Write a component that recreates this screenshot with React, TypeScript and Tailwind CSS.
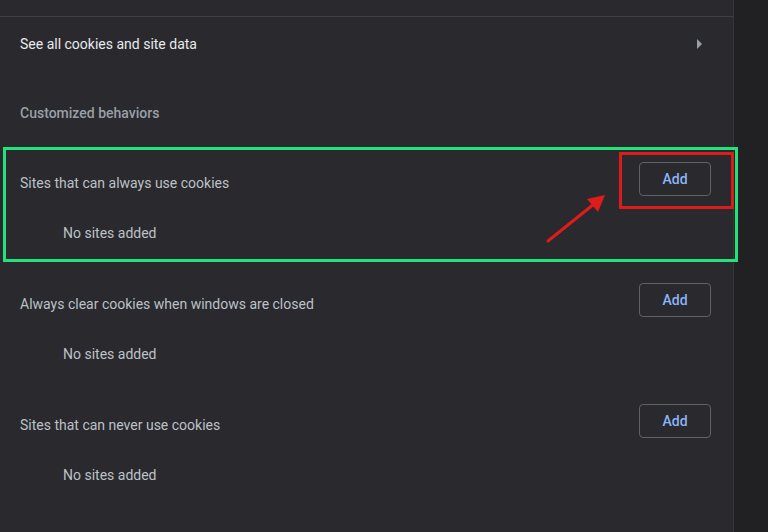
import React from 'react';

interface Behavior {
  label: string;
  highlighted?: boolean;
}

const behaviors: Behavior[] = [
  { label: 'Sites that can always use cookies', highlighted: true },
  { label: 'Always clear cookies when windows are closed' },
  { label: 'Sites that can never use cookies' },
];

function BehaviorRow({ label }: Behavior) {
  return (
    <div className="pb-[17px]">
      <div className="flex h-[60px] items-center justify-between pl-5 pr-[22px]">
        <span className="pt-[8px] text-[14px] leading-5 text-[#bdc1c6]">{label}</span>
        <button className="h-[34px] w-[72px] rounded-[4px] border border-[#5f6368] text-[14px] font-medium text-[#8ab4f8]">
          Add
        </button>
      </div>
      <div className="flex h-[44px] items-center pl-[63px] pt-[3px] text-[14px] leading-5 text-[#bdc1c6]">
        No sites added
      </div>
    </div>
  );
}

export default function App() {
  return (
    <div
      className="relative flex h-[532px] w-[768px] overflow-hidden bg-[#212124]"
      style={{ fontFamily: 'Roboto, "Noto Sans", "Liberation Sans", sans-serif' }}
    >
      <div className="w-[734px] shrink-0 border-r border-[#36363b] bg-[#29292e]">
        {/* tail of the previous setting's description, cut off at the top */}
        <div className="h-4 overflow-hidden pl-5">
          <div className="-mt-[18px] whitespace-nowrap text-[14px] leading-5 text-[#9aa0a6]">
            Preloads pages for faster browsing and searching, using cookies to remember your preferences
          </div>
        </div>
        <div className="h-px bg-[#404146]" />

        <div className="flex h-[53px] items-center justify-between pl-5 pr-[31px]">
          <span className="text-[14px] leading-5 text-[#e8eaed]">See all cookies and site data</span>
          <svg width="5" height="10" viewBox="0 0 5 10">
            <polygon points="0,0 5,5 0,10" fill="#9aa0a6" />
          </svg>
        </div>

        <div className="pl-5 pt-[35px] text-[14px] font-medium leading-4 text-[#9aa0a6]">
          Customized behaviors
        </div>
        <div className="h-[28px]" />

        {behaviors.map((b) => (
          <BehaviorRow key={b.label} {...b} />
        ))}
      </div>
      <div className="flex-1" />

      {/* annotations drawn over the screenshot */}
      <div className="pointer-events-none absolute left-[3px] top-[147px] h-[115px] w-[735px] border-[3px] border-[#22e27a]" />
      <div className="pointer-events-none absolute left-[619px] top-[152px] h-[57px] w-[115px] border-[3px] border-[#dc1c1c]" />
      <svg className="pointer-events-none absolute left-0 top-0" width="768" height="532">
        <line x1="548" y1="241" x2="594" y2="204" stroke="#e01b1b" strokeWidth="3" strokeLinecap="round" />
        <polygon points="605,195 598,212 587,199" fill="#e01b1b" />
      </svg>
    </div>
  );
}
